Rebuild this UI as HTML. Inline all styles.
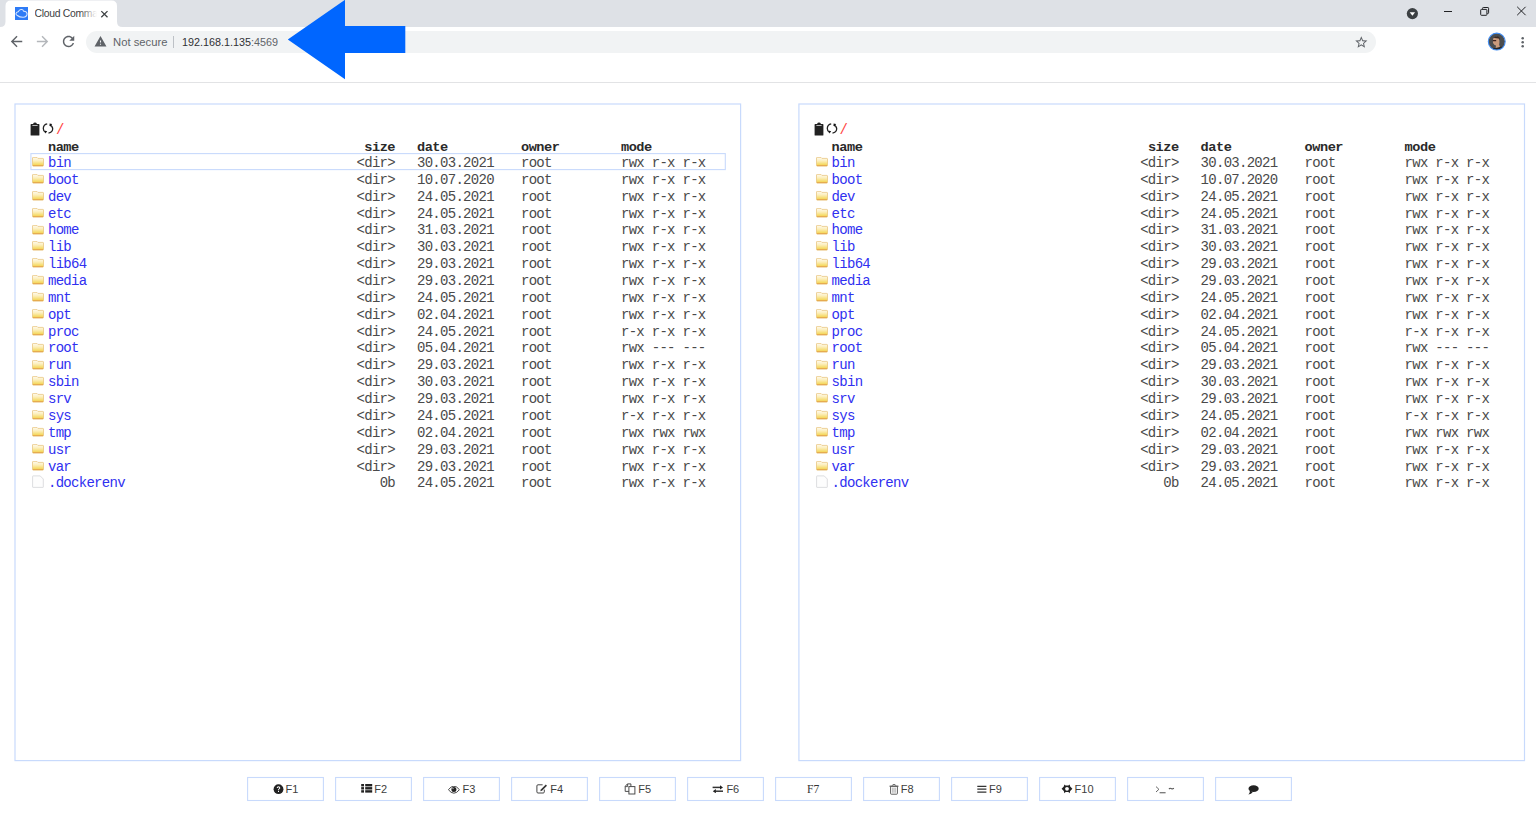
<!DOCTYPE html>
<html><head><meta charset="utf-8"><style>
html,body{margin:0;padding:0;width:1536px;height:835px;overflow:hidden;background:#fff;position:relative;}
.abs{position:absolute;}
#tabbar{position:absolute;left:0;top:0;width:1536px;height:27px;background:#dee1e6;}
#hline{position:absolute;left:0;top:82px;width:1536px;height:1px;background:#e2e3e5;}
.panel{position:absolute;top:103.5px;width:725px;height:656px;border:1.2px solid #d0e0fd;box-sizing:content-box;}
.t{position:absolute;font-family:"Liberation Mono",monospace;font-size:14px;letter-spacing:-0.72px;line-height:16.87px;height:16.87px;white-space:pre;color:#4a4a4a;}
.nm{color:#3030f0;}
.hdr{font-weight:bold;color:#2a2a2a;font-size:13.6px;letter-spacing:-0.48px;}
.path{color:#f44;}
.sel{position:absolute;width:694px;height:15.670000000000002px;border:1px solid #c9dafc;}
.icw{position:absolute;line-height:0;}
.clip{position:absolute;}
.tabtitle{left:34.5px;top:7.2px;font-family:"Liberation Sans",sans-serif;font-size:10.4px;letter-spacing:-0.3px;line-height:14px;color:#3c4043;white-space:nowrap;width:62px;overflow:hidden;}
.tabfade{left:80px;top:5px;width:17px;height:16px;background:linear-gradient(to right,rgba(255,255,255,0),#fff);}
.omni{left:86px;top:30.5px;width:1290px;height:22.5px;border-radius:11.25px;background:#f1f3f4;}
.ns{left:113.1px;top:36.1px;font-family:"Liberation Sans",sans-serif;font-size:11.25px;line-height:13px;color:#5f6368;white-space:nowrap;}
.url{left:181.9px;top:35.6px;font-family:"Liberation Sans",sans-serif;font-size:10.8px;line-height:13px;color:#5f6368;white-space:nowrap;}

.btn{position:absolute;top:777px;width:77px;height:24px;border:1px solid #c9dafc;box-sizing:border-box;}
.bt{position:absolute;top:783.7px;font-family:"Liberation Sans",sans-serif;font-size:11px;line-height:11px;color:#3d3d3d;white-space:nowrap;}
.bt7{position:absolute;top:783.7px;font-family:"Liberation Serif",serif;font-size:11.5px;line-height:11px;color:#333;white-space:nowrap;}
</style></head><body>
<svg width="0" height="0" style="position:absolute"><defs><linearGradient id="fg" x1="0" y1="0" x2="0" y2="1"><stop offset="0" stop-color="#fffaf0"/><stop offset="0.4" stop-color="#fcefbd"/><stop offset="1" stop-color="#f2d03e"/></linearGradient></defs></svg>

<div id="tabbar"></div>
<svg class="abs" style="left:0;top:0" width="130" height="28" viewBox="0 0 130 28">
<path d="M0 27 Q5.5 27 5.5 21.5 V6 Q5.5 0.5 11 0.5 H111.5 Q117 0.5 117 6 V21.5 Q117 27 122.5 27 Z" fill="#ffffff"/>
</svg>
<svg class="abs" style="left:15px;top:7px" width="13" height="13" viewBox="0 0 13 13">
<rect x="0" y="0" width="13" height="13" fill="#2e7bf6"/>
<path d="M0.9 6.8 Q1.2 5 3.2 4.8 Q4.6 2.1 6.4 2.5 Q8 2.3 8.6 4.2 Q11.7 4 12.1 6.9 Q11.9 10.1 8.3 10.3 Q4.6 10.4 2.4 8.5 Q1 7.8 0.9 6.8 Z" fill="none" stroke="#d6e5ff" stroke-width="1.05"/>
</svg>
<div class="abs tabtitle">Cloud Comma</div>
<div class="abs tabfade"></div>
<svg class="abs" style="left:100px;top:9.5px" width="9" height="9" viewBox="0 0 9 9"><path d="M1.3 1.1 L7.5 7.3 M7.5 1.1 L1.3 7.3" stroke="#3c4043" stroke-width="1.25"/></svg>

<svg class="abs" style="left:1405px;top:7px" width="15" height="14" viewBox="0 0 15 14"><circle cx="7.4" cy="6.6" r="5.6" fill="#3c4043"/><path d="M4.7 5.2 H10.1 L7.4 8.7 Z" fill="#fff"/></svg>
<div class="abs" style="left:1443.5px;top:10.8px;width:8.5px;height:1.2px;background:#202124"></div>
<svg class="abs" style="left:1479px;top:6px" width="12" height="11" viewBox="0 0 12 11"><path d="M3.6 2.9 V2.2 Q3.6 1.5 4.3 1.5 H8.9 Q9.6 1.5 9.6 2.2 V6.8 Q9.6 7.5 8.9 7.5 H8.3" fill="none" stroke="#202124" stroke-width="1"/><rect x="1.7" y="3.4" width="6.2" height="5.9" rx="0.7" fill="none" stroke="#202124" stroke-width="1"/></svg>
<svg class="abs" style="left:1516px;top:6px" width="11" height="10" viewBox="0 0 11 10"><path d="M1.2 0.8 L9.6 9.2 M9.6 0.8 L1.2 9.2" stroke="#202124" stroke-width="1"/></svg>

<svg class="abs" style="left:8.25px;top:33.15px" width="17.1" height="17.1" viewBox="0 0 24 24"><path d="M20 11H7.83l5.59-5.59L12 4l-8 8 8 8 1.41-1.41L7.83 13H20v-2z" fill="#5f6368"/></svg>
<svg class="abs" style="left:33.95px;top:33.15px" width="17.1" height="17.1" viewBox="0 0 24 24"><path d="M12 4l-1.41 1.41L16.17 11H4v2h12.17l-5.58 5.59L12 20l8-8z" fill="#b4b7bb"/></svg>
<svg class="abs" style="left:59.65px;top:33.15px" width="17.1" height="17.1" viewBox="0 0 24 24"><path d="M17.65 6.35C16.2 4.9 14.21 4 12 4c-4.42 0-7.99 3.58-7.99 8s3.57 8 7.99 8c3.73 0 6.84-2.55 7.73-6h-2.08c-.82 2.33-3.04 4-5.65 4-3.31 0-6-2.69-6-6s2.69-6 6-6c1.66 0 3.14.69 4.22 1.78L13 11h7V4l-2.35 2.35z" fill="#5f6368"/></svg>

<div class="abs omni"></div>
<svg class="abs" style="left:93.8px;top:34.9px" width="13" height="13" viewBox="0 0 24 24"><path d="M1 21h22L12 2 1 21zm12-3h-2v-2h2v2zm0-4h-2v-4h2v4z" fill="#5f6368"/></svg>
<div class="abs ns">Not secure</div>
<div class="abs" style="left:173px;top:36px;width:1px;height:11.5px;background:#bdc1c6"></div>
<div class="abs url"><span style="color:#303134">192.168.1.135</span>:4569</div>
<svg class="abs" style="left:1354.3px;top:34.6px" width="14.6" height="14.6" viewBox="0 0 24 24"><path d="M22 9.24l-7.19-.62L12 2 9.19 8.63 2 9.24l5.46 4.73L5.82 21 12 17.27 18.18 21l-1.63-7.03L22 9.24zM12 15.4l-3.76 2.27 1-4.28-3.32-2.88 4.38-.38L12 6.1l1.71 4.04 4.38.38-3.32 2.88 1 4.28L12 15.4z" fill="#5f6368"/></svg>
<svg class="abs" style="left:1487px;top:32px" width="20" height="20" viewBox="0 0 20 20"><defs><clipPath id="avc"><circle cx="9.75" cy="9.6" r="8.2"/></clipPath></defs><circle cx="9.75" cy="9.6" r="8.3" fill="#4b4d4f"/><g clip-path="url(#avc)"><path d="M6.2 6.4 Q7.5 4.6 10.2 4.9 Q12.3 5.4 12.4 8.2 Q12.6 10.8 12.1 12.6 L13.2 16 Q10.8 17.6 8.6 16.6 L9 13.6 Q7.2 13.4 6.6 11.8 Q6 11.5 5.9 10.8 L6.1 9.6 Q5.2 9.2 6 8.2 Z" fill="#c99a7c"/><path d="M6.4 5.8 Q8.6 3.9 11.2 4.6 Q13.2 5.4 12.9 8.4 Q12.4 7 11.6 6.6 Q9.5 6.2 6.4 5.8 Z" fill="#3a2a24"/><path d="M5.6 8 H9.2 V9.2 H5.8 Z" fill="#3a2220"/><path d="M2 19 Q4.5 15.5 8.8 16 Q12.2 15.2 14.2 14.4 Q17 15.5 18.5 19 Z" fill="#272727"/></g><circle cx="9.75" cy="9.6" r="8.45" fill="none" stroke="#3f8cf3" stroke-width="1.1"/></svg>
<svg class="abs" style="left:1520px;top:36px" width="6" height="13" viewBox="0 0 6 13"><circle cx="2.7" cy="2.2" r="1.25" fill="#5f6368"/><circle cx="2.7" cy="6.2" r="1.25" fill="#5f6368"/><circle cx="2.7" cy="10.3" r="1.25" fill="#5f6368"/></svg>

<div id="hline"></div>
<svg class="abs" style="left:280px;top:0" width="130" height="82" viewBox="280 0 130 82"><path d="M287.8 39.4 L345 -0.2 V25.9 H405.3 V53 H345 V79.2 Z" fill="#0066ff"/></svg>

<svg class="clip" style="left:30px;top:122px" width="10" height="14" viewBox="0 0 10 14"><path d="M0.6 2.6 Q0.6 2 1.2 2 H3 Q3.6 0.6 5 0.6 Q6.4 0.6 7 2 H8.8 Q9.4 2 9.4 2.6 V13 Q9.4 13.5 8.8 13.5 H1.2 Q0.6 13.5 0.6 13 Z" fill="#222"/><path d="M2.4 3.5 H7.6" stroke="#ddd" stroke-width="0.8"/></svg>
<svg class="clip" style="left:42px;top:123px" width="12" height="11" viewBox="0 0 12 11"><path d="M5.2 0.9 Q1.4 1.6 1.3 5.4 Q1.4 8.2 3.4 9.3" fill="none" stroke="#222" stroke-width="1.3"/><path d="M2.4 7.5 L5.2 8.2 L3.4 10.6 Z" fill="#111"/><path d="M7.4 1.9 Q10.6 2.9 10.7 5.7 Q10.6 9.3 6.5 10.1" fill="none" stroke="#222" stroke-width="1.3"/><path d="M7.5 0.5 L10.1 0.9 L8.6 3.5 Z" fill="#111"/></svg>
<div class="t path" style="left:56px;top:121.72999999999999px">/</div>
<div class="t hdr" style="left:48px;top:139.73px">name</div>
<div class="t hdr r" style="right:1141px;top:139.73px">size</div>
<div class="t hdr" style="left:417px;top:139.73px">date</div>
<div class="t hdr" style="left:521px;top:139.73px">owner</div>
<div class="t hdr" style="left:621px;top:139.73px">mode</div>
<div class="icw" style="left:32px;top:157.1px"><svg class="ic" width="12" height="10" viewBox="0 0 12 10"><path d="M0.5 1 Q0.5 0.4 1.1 0.4 H5 L5.9 1.4 H10.9 Q11.5 1.4 11.5 2 V8.5 Q11.5 9.1 10.9 9.1 H1.1 Q0.5 9.1 0.5 8.5 Z" fill="url(#fg)" stroke="#e9c682" stroke-width="0.8"/><path d="M1 8.6 H11" stroke="#e4a34e" stroke-width="0.9"/></svg></div>
<div class="t nm" style="left:48px;top:154.9px">bin</div>
<div class="t r" style="right:1141px;top:154.9px">&lt;dir&gt;</div>
<div class="t" style="left:417px;top:154.9px">30.03.2021</div>
<div class="t" style="left:521px;top:154.9px">root</div>
<div class="t" style="left:621px;top:154.9px">rwx r-x r-x</div>
<div class="icw" style="left:32px;top:173.97px"><svg class="ic" width="12" height="10" viewBox="0 0 12 10"><path d="M0.5 1 Q0.5 0.4 1.1 0.4 H5 L5.9 1.4 H10.9 Q11.5 1.4 11.5 2 V8.5 Q11.5 9.1 10.9 9.1 H1.1 Q0.5 9.1 0.5 8.5 Z" fill="url(#fg)" stroke="#e9c682" stroke-width="0.8"/><path d="M1 8.6 H11" stroke="#e4a34e" stroke-width="0.9"/></svg></div>
<div class="t nm" style="left:48px;top:171.77px">boot</div>
<div class="t r" style="right:1141px;top:171.77px">&lt;dir&gt;</div>
<div class="t" style="left:417px;top:171.77px">10.07.2020</div>
<div class="t" style="left:521px;top:171.77px">root</div>
<div class="t" style="left:621px;top:171.77px">rwx r-x r-x</div>
<div class="icw" style="left:32px;top:190.84px"><svg class="ic" width="12" height="10" viewBox="0 0 12 10"><path d="M0.5 1 Q0.5 0.4 1.1 0.4 H5 L5.9 1.4 H10.9 Q11.5 1.4 11.5 2 V8.5 Q11.5 9.1 10.9 9.1 H1.1 Q0.5 9.1 0.5 8.5 Z" fill="url(#fg)" stroke="#e9c682" stroke-width="0.8"/><path d="M1 8.6 H11" stroke="#e4a34e" stroke-width="0.9"/></svg></div>
<div class="t nm" style="left:48px;top:188.64000000000001px">dev</div>
<div class="t r" style="right:1141px;top:188.64000000000001px">&lt;dir&gt;</div>
<div class="t" style="left:417px;top:188.64000000000001px">24.05.2021</div>
<div class="t" style="left:521px;top:188.64000000000001px">root</div>
<div class="t" style="left:621px;top:188.64000000000001px">rwx r-x r-x</div>
<div class="icw" style="left:32px;top:207.70999999999998px"><svg class="ic" width="12" height="10" viewBox="0 0 12 10"><path d="M0.5 1 Q0.5 0.4 1.1 0.4 H5 L5.9 1.4 H10.9 Q11.5 1.4 11.5 2 V8.5 Q11.5 9.1 10.9 9.1 H1.1 Q0.5 9.1 0.5 8.5 Z" fill="url(#fg)" stroke="#e9c682" stroke-width="0.8"/><path d="M1 8.6 H11" stroke="#e4a34e" stroke-width="0.9"/></svg></div>
<div class="t nm" style="left:48px;top:205.51px">etc</div>
<div class="t r" style="right:1141px;top:205.51px">&lt;dir&gt;</div>
<div class="t" style="left:417px;top:205.51px">24.05.2021</div>
<div class="t" style="left:521px;top:205.51px">root</div>
<div class="t" style="left:621px;top:205.51px">rwx r-x r-x</div>
<div class="icw" style="left:32px;top:224.57999999999998px"><svg class="ic" width="12" height="10" viewBox="0 0 12 10"><path d="M0.5 1 Q0.5 0.4 1.1 0.4 H5 L5.9 1.4 H10.9 Q11.5 1.4 11.5 2 V8.5 Q11.5 9.1 10.9 9.1 H1.1 Q0.5 9.1 0.5 8.5 Z" fill="url(#fg)" stroke="#e9c682" stroke-width="0.8"/><path d="M1 8.6 H11" stroke="#e4a34e" stroke-width="0.9"/></svg></div>
<div class="t nm" style="left:48px;top:222.38px">home</div>
<div class="t r" style="right:1141px;top:222.38px">&lt;dir&gt;</div>
<div class="t" style="left:417px;top:222.38px">31.03.2021</div>
<div class="t" style="left:521px;top:222.38px">root</div>
<div class="t" style="left:621px;top:222.38px">rwx r-x r-x</div>
<div class="icw" style="left:32px;top:241.45px"><svg class="ic" width="12" height="10" viewBox="0 0 12 10"><path d="M0.5 1 Q0.5 0.4 1.1 0.4 H5 L5.9 1.4 H10.9 Q11.5 1.4 11.5 2 V8.5 Q11.5 9.1 10.9 9.1 H1.1 Q0.5 9.1 0.5 8.5 Z" fill="url(#fg)" stroke="#e9c682" stroke-width="0.8"/><path d="M1 8.6 H11" stroke="#e4a34e" stroke-width="0.9"/></svg></div>
<div class="t nm" style="left:48px;top:239.25px">lib</div>
<div class="t r" style="right:1141px;top:239.25px">&lt;dir&gt;</div>
<div class="t" style="left:417px;top:239.25px">30.03.2021</div>
<div class="t" style="left:521px;top:239.25px">root</div>
<div class="t" style="left:621px;top:239.25px">rwx r-x r-x</div>
<div class="icw" style="left:32px;top:258.32px"><svg class="ic" width="12" height="10" viewBox="0 0 12 10"><path d="M0.5 1 Q0.5 0.4 1.1 0.4 H5 L5.9 1.4 H10.9 Q11.5 1.4 11.5 2 V8.5 Q11.5 9.1 10.9 9.1 H1.1 Q0.5 9.1 0.5 8.5 Z" fill="url(#fg)" stroke="#e9c682" stroke-width="0.8"/><path d="M1 8.6 H11" stroke="#e4a34e" stroke-width="0.9"/></svg></div>
<div class="t nm" style="left:48px;top:256.12px">lib64</div>
<div class="t r" style="right:1141px;top:256.12px">&lt;dir&gt;</div>
<div class="t" style="left:417px;top:256.12px">29.03.2021</div>
<div class="t" style="left:521px;top:256.12px">root</div>
<div class="t" style="left:621px;top:256.12px">rwx r-x r-x</div>
<div class="icw" style="left:32px;top:275.19px"><svg class="ic" width="12" height="10" viewBox="0 0 12 10"><path d="M0.5 1 Q0.5 0.4 1.1 0.4 H5 L5.9 1.4 H10.9 Q11.5 1.4 11.5 2 V8.5 Q11.5 9.1 10.9 9.1 H1.1 Q0.5 9.1 0.5 8.5 Z" fill="url(#fg)" stroke="#e9c682" stroke-width="0.8"/><path d="M1 8.6 H11" stroke="#e4a34e" stroke-width="0.9"/></svg></div>
<div class="t nm" style="left:48px;top:272.99px">media</div>
<div class="t r" style="right:1141px;top:272.99px">&lt;dir&gt;</div>
<div class="t" style="left:417px;top:272.99px">29.03.2021</div>
<div class="t" style="left:521px;top:272.99px">root</div>
<div class="t" style="left:621px;top:272.99px">rwx r-x r-x</div>
<div class="icw" style="left:32px;top:292.06px"><svg class="ic" width="12" height="10" viewBox="0 0 12 10"><path d="M0.5 1 Q0.5 0.4 1.1 0.4 H5 L5.9 1.4 H10.9 Q11.5 1.4 11.5 2 V8.5 Q11.5 9.1 10.9 9.1 H1.1 Q0.5 9.1 0.5 8.5 Z" fill="url(#fg)" stroke="#e9c682" stroke-width="0.8"/><path d="M1 8.6 H11" stroke="#e4a34e" stroke-width="0.9"/></svg></div>
<div class="t nm" style="left:48px;top:289.86px">mnt</div>
<div class="t r" style="right:1141px;top:289.86px">&lt;dir&gt;</div>
<div class="t" style="left:417px;top:289.86px">24.05.2021</div>
<div class="t" style="left:521px;top:289.86px">root</div>
<div class="t" style="left:621px;top:289.86px">rwx r-x r-x</div>
<div class="icw" style="left:32px;top:308.93px"><svg class="ic" width="12" height="10" viewBox="0 0 12 10"><path d="M0.5 1 Q0.5 0.4 1.1 0.4 H5 L5.9 1.4 H10.9 Q11.5 1.4 11.5 2 V8.5 Q11.5 9.1 10.9 9.1 H1.1 Q0.5 9.1 0.5 8.5 Z" fill="url(#fg)" stroke="#e9c682" stroke-width="0.8"/><path d="M1 8.6 H11" stroke="#e4a34e" stroke-width="0.9"/></svg></div>
<div class="t nm" style="left:48px;top:306.73px">opt</div>
<div class="t r" style="right:1141px;top:306.73px">&lt;dir&gt;</div>
<div class="t" style="left:417px;top:306.73px">02.04.2021</div>
<div class="t" style="left:521px;top:306.73px">root</div>
<div class="t" style="left:621px;top:306.73px">rwx r-x r-x</div>
<div class="icw" style="left:32px;top:325.8px"><svg class="ic" width="12" height="10" viewBox="0 0 12 10"><path d="M0.5 1 Q0.5 0.4 1.1 0.4 H5 L5.9 1.4 H10.9 Q11.5 1.4 11.5 2 V8.5 Q11.5 9.1 10.9 9.1 H1.1 Q0.5 9.1 0.5 8.5 Z" fill="url(#fg)" stroke="#e9c682" stroke-width="0.8"/><path d="M1 8.6 H11" stroke="#e4a34e" stroke-width="0.9"/></svg></div>
<div class="t nm" style="left:48px;top:323.6px">proc</div>
<div class="t r" style="right:1141px;top:323.6px">&lt;dir&gt;</div>
<div class="t" style="left:417px;top:323.6px">24.05.2021</div>
<div class="t" style="left:521px;top:323.6px">root</div>
<div class="t" style="left:621px;top:323.6px">r-x r-x r-x</div>
<div class="icw" style="left:32px;top:342.67px"><svg class="ic" width="12" height="10" viewBox="0 0 12 10"><path d="M0.5 1 Q0.5 0.4 1.1 0.4 H5 L5.9 1.4 H10.9 Q11.5 1.4 11.5 2 V8.5 Q11.5 9.1 10.9 9.1 H1.1 Q0.5 9.1 0.5 8.5 Z" fill="url(#fg)" stroke="#e9c682" stroke-width="0.8"/><path d="M1 8.6 H11" stroke="#e4a34e" stroke-width="0.9"/></svg></div>
<div class="t nm" style="left:48px;top:340.47px">root</div>
<div class="t r" style="right:1141px;top:340.47px">&lt;dir&gt;</div>
<div class="t" style="left:417px;top:340.47px">05.04.2021</div>
<div class="t" style="left:521px;top:340.47px">root</div>
<div class="t" style="left:621px;top:340.47px">rwx --- ---</div>
<div class="icw" style="left:32px;top:359.53999999999996px"><svg class="ic" width="12" height="10" viewBox="0 0 12 10"><path d="M0.5 1 Q0.5 0.4 1.1 0.4 H5 L5.9 1.4 H10.9 Q11.5 1.4 11.5 2 V8.5 Q11.5 9.1 10.9 9.1 H1.1 Q0.5 9.1 0.5 8.5 Z" fill="url(#fg)" stroke="#e9c682" stroke-width="0.8"/><path d="M1 8.6 H11" stroke="#e4a34e" stroke-width="0.9"/></svg></div>
<div class="t nm" style="left:48px;top:357.34px">run</div>
<div class="t r" style="right:1141px;top:357.34px">&lt;dir&gt;</div>
<div class="t" style="left:417px;top:357.34px">29.03.2021</div>
<div class="t" style="left:521px;top:357.34px">root</div>
<div class="t" style="left:621px;top:357.34px">rwx r-x r-x</div>
<div class="icw" style="left:32px;top:376.40999999999997px"><svg class="ic" width="12" height="10" viewBox="0 0 12 10"><path d="M0.5 1 Q0.5 0.4 1.1 0.4 H5 L5.9 1.4 H10.9 Q11.5 1.4 11.5 2 V8.5 Q11.5 9.1 10.9 9.1 H1.1 Q0.5 9.1 0.5 8.5 Z" fill="url(#fg)" stroke="#e9c682" stroke-width="0.8"/><path d="M1 8.6 H11" stroke="#e4a34e" stroke-width="0.9"/></svg></div>
<div class="t nm" style="left:48px;top:374.21px">sbin</div>
<div class="t r" style="right:1141px;top:374.21px">&lt;dir&gt;</div>
<div class="t" style="left:417px;top:374.21px">30.03.2021</div>
<div class="t" style="left:521px;top:374.21px">root</div>
<div class="t" style="left:621px;top:374.21px">rwx r-x r-x</div>
<div class="icw" style="left:32px;top:393.28px"><svg class="ic" width="12" height="10" viewBox="0 0 12 10"><path d="M0.5 1 Q0.5 0.4 1.1 0.4 H5 L5.9 1.4 H10.9 Q11.5 1.4 11.5 2 V8.5 Q11.5 9.1 10.9 9.1 H1.1 Q0.5 9.1 0.5 8.5 Z" fill="url(#fg)" stroke="#e9c682" stroke-width="0.8"/><path d="M1 8.6 H11" stroke="#e4a34e" stroke-width="0.9"/></svg></div>
<div class="t nm" style="left:48px;top:391.08px">srv</div>
<div class="t r" style="right:1141px;top:391.08px">&lt;dir&gt;</div>
<div class="t" style="left:417px;top:391.08px">29.03.2021</div>
<div class="t" style="left:521px;top:391.08px">root</div>
<div class="t" style="left:621px;top:391.08px">rwx r-x r-x</div>
<div class="icw" style="left:32px;top:410.15px"><svg class="ic" width="12" height="10" viewBox="0 0 12 10"><path d="M0.5 1 Q0.5 0.4 1.1 0.4 H5 L5.9 1.4 H10.9 Q11.5 1.4 11.5 2 V8.5 Q11.5 9.1 10.9 9.1 H1.1 Q0.5 9.1 0.5 8.5 Z" fill="url(#fg)" stroke="#e9c682" stroke-width="0.8"/><path d="M1 8.6 H11" stroke="#e4a34e" stroke-width="0.9"/></svg></div>
<div class="t nm" style="left:48px;top:407.95px">sys</div>
<div class="t r" style="right:1141px;top:407.95px">&lt;dir&gt;</div>
<div class="t" style="left:417px;top:407.95px">24.05.2021</div>
<div class="t" style="left:521px;top:407.95px">root</div>
<div class="t" style="left:621px;top:407.95px">r-x r-x r-x</div>
<div class="icw" style="left:32px;top:427.02px"><svg class="ic" width="12" height="10" viewBox="0 0 12 10"><path d="M0.5 1 Q0.5 0.4 1.1 0.4 H5 L5.9 1.4 H10.9 Q11.5 1.4 11.5 2 V8.5 Q11.5 9.1 10.9 9.1 H1.1 Q0.5 9.1 0.5 8.5 Z" fill="url(#fg)" stroke="#e9c682" stroke-width="0.8"/><path d="M1 8.6 H11" stroke="#e4a34e" stroke-width="0.9"/></svg></div>
<div class="t nm" style="left:48px;top:424.82px">tmp</div>
<div class="t r" style="right:1141px;top:424.82px">&lt;dir&gt;</div>
<div class="t" style="left:417px;top:424.82px">02.04.2021</div>
<div class="t" style="left:521px;top:424.82px">root</div>
<div class="t" style="left:621px;top:424.82px">rwx rwx rwx</div>
<div class="icw" style="left:32px;top:443.89px"><svg class="ic" width="12" height="10" viewBox="0 0 12 10"><path d="M0.5 1 Q0.5 0.4 1.1 0.4 H5 L5.9 1.4 H10.9 Q11.5 1.4 11.5 2 V8.5 Q11.5 9.1 10.9 9.1 H1.1 Q0.5 9.1 0.5 8.5 Z" fill="url(#fg)" stroke="#e9c682" stroke-width="0.8"/><path d="M1 8.6 H11" stroke="#e4a34e" stroke-width="0.9"/></svg></div>
<div class="t nm" style="left:48px;top:441.69px">usr</div>
<div class="t r" style="right:1141px;top:441.69px">&lt;dir&gt;</div>
<div class="t" style="left:417px;top:441.69px">29.03.2021</div>
<div class="t" style="left:521px;top:441.69px">root</div>
<div class="t" style="left:621px;top:441.69px">rwx r-x r-x</div>
<div class="icw" style="left:32px;top:460.76px"><svg class="ic" width="12" height="10" viewBox="0 0 12 10"><path d="M0.5 1 Q0.5 0.4 1.1 0.4 H5 L5.9 1.4 H10.9 Q11.5 1.4 11.5 2 V8.5 Q11.5 9.1 10.9 9.1 H1.1 Q0.5 9.1 0.5 8.5 Z" fill="url(#fg)" stroke="#e9c682" stroke-width="0.8"/><path d="M1 8.6 H11" stroke="#e4a34e" stroke-width="0.9"/></svg></div>
<div class="t nm" style="left:48px;top:458.56px">var</div>
<div class="t r" style="right:1141px;top:458.56px">&lt;dir&gt;</div>
<div class="t" style="left:417px;top:458.56px">29.03.2021</div>
<div class="t" style="left:521px;top:458.56px">root</div>
<div class="t" style="left:621px;top:458.56px">rwx r-x r-x</div>
<div class="icw" style="left:32px;top:474.73px"><svg class="ic" width="12" height="13" viewBox="0 0 12 13"><path d="M1 0.9 Q0.6 0.9 0.6 1.3 V12 Q0.6 12.4 1 12.4 H10.9 Q11.3 12.4 11.3 12 V4 L8.2 0.9 Z" fill="#fdfdfd" stroke="#d9dadc" stroke-width="0.9"/></svg></div>
<div class="t nm" style="left:48px;top:475.43px">.dockerenv</div>
<div class="t r" style="right:1141px;top:475.43px">0b</div>
<div class="t" style="left:417px;top:475.43px">24.05.2021</div>
<div class="t" style="left:521px;top:475.43px">root</div>
<div class="t" style="left:621px;top:475.43px">rwx r-x r-x</div>
<svg class="clip" style="left:813.6px;top:122px" width="10" height="14" viewBox="0 0 10 14"><path d="M0.6 2.6 Q0.6 2 1.2 2 H3 Q3.6 0.6 5 0.6 Q6.4 0.6 7 2 H8.8 Q9.4 2 9.4 2.6 V13 Q9.4 13.5 8.8 13.5 H1.2 Q0.6 13.5 0.6 13 Z" fill="#222"/><path d="M2.4 3.5 H7.6" stroke="#ddd" stroke-width="0.8"/></svg>
<svg class="clip" style="left:825.6px;top:123px" width="12" height="11" viewBox="0 0 12 11"><path d="M5.2 0.9 Q1.4 1.6 1.3 5.4 Q1.4 8.2 3.4 9.3" fill="none" stroke="#222" stroke-width="1.3"/><path d="M2.4 7.5 L5.2 8.2 L3.4 10.6 Z" fill="#111"/><path d="M7.4 1.9 Q10.6 2.9 10.7 5.7 Q10.6 9.3 6.5 10.1" fill="none" stroke="#222" stroke-width="1.3"/><path d="M7.5 0.5 L10.1 0.9 L8.6 3.5 Z" fill="#111"/></svg>
<div class="t path" style="left:839.6px;top:121.72999999999999px">/</div>
<div class="t hdr" style="left:831.6px;top:139.73px">name</div>
<div class="t hdr r" style="right:357.4000000000001px;top:139.73px">size</div>
<div class="t hdr" style="left:1200.6px;top:139.73px">date</div>
<div class="t hdr" style="left:1304.6px;top:139.73px">owner</div>
<div class="t hdr" style="left:1404.6px;top:139.73px">mode</div>
<div class="icw" style="left:815.6px;top:157.1px"><svg class="ic" width="12" height="10" viewBox="0 0 12 10"><path d="M0.5 1 Q0.5 0.4 1.1 0.4 H5 L5.9 1.4 H10.9 Q11.5 1.4 11.5 2 V8.5 Q11.5 9.1 10.9 9.1 H1.1 Q0.5 9.1 0.5 8.5 Z" fill="url(#fg)" stroke="#e9c682" stroke-width="0.8"/><path d="M1 8.6 H11" stroke="#e4a34e" stroke-width="0.9"/></svg></div>
<div class="t nm" style="left:831.6px;top:154.9px">bin</div>
<div class="t r" style="right:357.4000000000001px;top:154.9px">&lt;dir&gt;</div>
<div class="t" style="left:1200.6px;top:154.9px">30.03.2021</div>
<div class="t" style="left:1304.6px;top:154.9px">root</div>
<div class="t" style="left:1404.6px;top:154.9px">rwx r-x r-x</div>
<div class="icw" style="left:815.6px;top:173.97px"><svg class="ic" width="12" height="10" viewBox="0 0 12 10"><path d="M0.5 1 Q0.5 0.4 1.1 0.4 H5 L5.9 1.4 H10.9 Q11.5 1.4 11.5 2 V8.5 Q11.5 9.1 10.9 9.1 H1.1 Q0.5 9.1 0.5 8.5 Z" fill="url(#fg)" stroke="#e9c682" stroke-width="0.8"/><path d="M1 8.6 H11" stroke="#e4a34e" stroke-width="0.9"/></svg></div>
<div class="t nm" style="left:831.6px;top:171.77px">boot</div>
<div class="t r" style="right:357.4000000000001px;top:171.77px">&lt;dir&gt;</div>
<div class="t" style="left:1200.6px;top:171.77px">10.07.2020</div>
<div class="t" style="left:1304.6px;top:171.77px">root</div>
<div class="t" style="left:1404.6px;top:171.77px">rwx r-x r-x</div>
<div class="icw" style="left:815.6px;top:190.84px"><svg class="ic" width="12" height="10" viewBox="0 0 12 10"><path d="M0.5 1 Q0.5 0.4 1.1 0.4 H5 L5.9 1.4 H10.9 Q11.5 1.4 11.5 2 V8.5 Q11.5 9.1 10.9 9.1 H1.1 Q0.5 9.1 0.5 8.5 Z" fill="url(#fg)" stroke="#e9c682" stroke-width="0.8"/><path d="M1 8.6 H11" stroke="#e4a34e" stroke-width="0.9"/></svg></div>
<div class="t nm" style="left:831.6px;top:188.64000000000001px">dev</div>
<div class="t r" style="right:357.4000000000001px;top:188.64000000000001px">&lt;dir&gt;</div>
<div class="t" style="left:1200.6px;top:188.64000000000001px">24.05.2021</div>
<div class="t" style="left:1304.6px;top:188.64000000000001px">root</div>
<div class="t" style="left:1404.6px;top:188.64000000000001px">rwx r-x r-x</div>
<div class="icw" style="left:815.6px;top:207.70999999999998px"><svg class="ic" width="12" height="10" viewBox="0 0 12 10"><path d="M0.5 1 Q0.5 0.4 1.1 0.4 H5 L5.9 1.4 H10.9 Q11.5 1.4 11.5 2 V8.5 Q11.5 9.1 10.9 9.1 H1.1 Q0.5 9.1 0.5 8.5 Z" fill="url(#fg)" stroke="#e9c682" stroke-width="0.8"/><path d="M1 8.6 H11" stroke="#e4a34e" stroke-width="0.9"/></svg></div>
<div class="t nm" style="left:831.6px;top:205.51px">etc</div>
<div class="t r" style="right:357.4000000000001px;top:205.51px">&lt;dir&gt;</div>
<div class="t" style="left:1200.6px;top:205.51px">24.05.2021</div>
<div class="t" style="left:1304.6px;top:205.51px">root</div>
<div class="t" style="left:1404.6px;top:205.51px">rwx r-x r-x</div>
<div class="icw" style="left:815.6px;top:224.57999999999998px"><svg class="ic" width="12" height="10" viewBox="0 0 12 10"><path d="M0.5 1 Q0.5 0.4 1.1 0.4 H5 L5.9 1.4 H10.9 Q11.5 1.4 11.5 2 V8.5 Q11.5 9.1 10.9 9.1 H1.1 Q0.5 9.1 0.5 8.5 Z" fill="url(#fg)" stroke="#e9c682" stroke-width="0.8"/><path d="M1 8.6 H11" stroke="#e4a34e" stroke-width="0.9"/></svg></div>
<div class="t nm" style="left:831.6px;top:222.38px">home</div>
<div class="t r" style="right:357.4000000000001px;top:222.38px">&lt;dir&gt;</div>
<div class="t" style="left:1200.6px;top:222.38px">31.03.2021</div>
<div class="t" style="left:1304.6px;top:222.38px">root</div>
<div class="t" style="left:1404.6px;top:222.38px">rwx r-x r-x</div>
<div class="icw" style="left:815.6px;top:241.45px"><svg class="ic" width="12" height="10" viewBox="0 0 12 10"><path d="M0.5 1 Q0.5 0.4 1.1 0.4 H5 L5.9 1.4 H10.9 Q11.5 1.4 11.5 2 V8.5 Q11.5 9.1 10.9 9.1 H1.1 Q0.5 9.1 0.5 8.5 Z" fill="url(#fg)" stroke="#e9c682" stroke-width="0.8"/><path d="M1 8.6 H11" stroke="#e4a34e" stroke-width="0.9"/></svg></div>
<div class="t nm" style="left:831.6px;top:239.25px">lib</div>
<div class="t r" style="right:357.4000000000001px;top:239.25px">&lt;dir&gt;</div>
<div class="t" style="left:1200.6px;top:239.25px">30.03.2021</div>
<div class="t" style="left:1304.6px;top:239.25px">root</div>
<div class="t" style="left:1404.6px;top:239.25px">rwx r-x r-x</div>
<div class="icw" style="left:815.6px;top:258.32px"><svg class="ic" width="12" height="10" viewBox="0 0 12 10"><path d="M0.5 1 Q0.5 0.4 1.1 0.4 H5 L5.9 1.4 H10.9 Q11.5 1.4 11.5 2 V8.5 Q11.5 9.1 10.9 9.1 H1.1 Q0.5 9.1 0.5 8.5 Z" fill="url(#fg)" stroke="#e9c682" stroke-width="0.8"/><path d="M1 8.6 H11" stroke="#e4a34e" stroke-width="0.9"/></svg></div>
<div class="t nm" style="left:831.6px;top:256.12px">lib64</div>
<div class="t r" style="right:357.4000000000001px;top:256.12px">&lt;dir&gt;</div>
<div class="t" style="left:1200.6px;top:256.12px">29.03.2021</div>
<div class="t" style="left:1304.6px;top:256.12px">root</div>
<div class="t" style="left:1404.6px;top:256.12px">rwx r-x r-x</div>
<div class="icw" style="left:815.6px;top:275.19px"><svg class="ic" width="12" height="10" viewBox="0 0 12 10"><path d="M0.5 1 Q0.5 0.4 1.1 0.4 H5 L5.9 1.4 H10.9 Q11.5 1.4 11.5 2 V8.5 Q11.5 9.1 10.9 9.1 H1.1 Q0.5 9.1 0.5 8.5 Z" fill="url(#fg)" stroke="#e9c682" stroke-width="0.8"/><path d="M1 8.6 H11" stroke="#e4a34e" stroke-width="0.9"/></svg></div>
<div class="t nm" style="left:831.6px;top:272.99px">media</div>
<div class="t r" style="right:357.4000000000001px;top:272.99px">&lt;dir&gt;</div>
<div class="t" style="left:1200.6px;top:272.99px">29.03.2021</div>
<div class="t" style="left:1304.6px;top:272.99px">root</div>
<div class="t" style="left:1404.6px;top:272.99px">rwx r-x r-x</div>
<div class="icw" style="left:815.6px;top:292.06px"><svg class="ic" width="12" height="10" viewBox="0 0 12 10"><path d="M0.5 1 Q0.5 0.4 1.1 0.4 H5 L5.9 1.4 H10.9 Q11.5 1.4 11.5 2 V8.5 Q11.5 9.1 10.9 9.1 H1.1 Q0.5 9.1 0.5 8.5 Z" fill="url(#fg)" stroke="#e9c682" stroke-width="0.8"/><path d="M1 8.6 H11" stroke="#e4a34e" stroke-width="0.9"/></svg></div>
<div class="t nm" style="left:831.6px;top:289.86px">mnt</div>
<div class="t r" style="right:357.4000000000001px;top:289.86px">&lt;dir&gt;</div>
<div class="t" style="left:1200.6px;top:289.86px">24.05.2021</div>
<div class="t" style="left:1304.6px;top:289.86px">root</div>
<div class="t" style="left:1404.6px;top:289.86px">rwx r-x r-x</div>
<div class="icw" style="left:815.6px;top:308.93px"><svg class="ic" width="12" height="10" viewBox="0 0 12 10"><path d="M0.5 1 Q0.5 0.4 1.1 0.4 H5 L5.9 1.4 H10.9 Q11.5 1.4 11.5 2 V8.5 Q11.5 9.1 10.9 9.1 H1.1 Q0.5 9.1 0.5 8.5 Z" fill="url(#fg)" stroke="#e9c682" stroke-width="0.8"/><path d="M1 8.6 H11" stroke="#e4a34e" stroke-width="0.9"/></svg></div>
<div class="t nm" style="left:831.6px;top:306.73px">opt</div>
<div class="t r" style="right:357.4000000000001px;top:306.73px">&lt;dir&gt;</div>
<div class="t" style="left:1200.6px;top:306.73px">02.04.2021</div>
<div class="t" style="left:1304.6px;top:306.73px">root</div>
<div class="t" style="left:1404.6px;top:306.73px">rwx r-x r-x</div>
<div class="icw" style="left:815.6px;top:325.8px"><svg class="ic" width="12" height="10" viewBox="0 0 12 10"><path d="M0.5 1 Q0.5 0.4 1.1 0.4 H5 L5.9 1.4 H10.9 Q11.5 1.4 11.5 2 V8.5 Q11.5 9.1 10.9 9.1 H1.1 Q0.5 9.1 0.5 8.5 Z" fill="url(#fg)" stroke="#e9c682" stroke-width="0.8"/><path d="M1 8.6 H11" stroke="#e4a34e" stroke-width="0.9"/></svg></div>
<div class="t nm" style="left:831.6px;top:323.6px">proc</div>
<div class="t r" style="right:357.4000000000001px;top:323.6px">&lt;dir&gt;</div>
<div class="t" style="left:1200.6px;top:323.6px">24.05.2021</div>
<div class="t" style="left:1304.6px;top:323.6px">root</div>
<div class="t" style="left:1404.6px;top:323.6px">r-x r-x r-x</div>
<div class="icw" style="left:815.6px;top:342.67px"><svg class="ic" width="12" height="10" viewBox="0 0 12 10"><path d="M0.5 1 Q0.5 0.4 1.1 0.4 H5 L5.9 1.4 H10.9 Q11.5 1.4 11.5 2 V8.5 Q11.5 9.1 10.9 9.1 H1.1 Q0.5 9.1 0.5 8.5 Z" fill="url(#fg)" stroke="#e9c682" stroke-width="0.8"/><path d="M1 8.6 H11" stroke="#e4a34e" stroke-width="0.9"/></svg></div>
<div class="t nm" style="left:831.6px;top:340.47px">root</div>
<div class="t r" style="right:357.4000000000001px;top:340.47px">&lt;dir&gt;</div>
<div class="t" style="left:1200.6px;top:340.47px">05.04.2021</div>
<div class="t" style="left:1304.6px;top:340.47px">root</div>
<div class="t" style="left:1404.6px;top:340.47px">rwx --- ---</div>
<div class="icw" style="left:815.6px;top:359.53999999999996px"><svg class="ic" width="12" height="10" viewBox="0 0 12 10"><path d="M0.5 1 Q0.5 0.4 1.1 0.4 H5 L5.9 1.4 H10.9 Q11.5 1.4 11.5 2 V8.5 Q11.5 9.1 10.9 9.1 H1.1 Q0.5 9.1 0.5 8.5 Z" fill="url(#fg)" stroke="#e9c682" stroke-width="0.8"/><path d="M1 8.6 H11" stroke="#e4a34e" stroke-width="0.9"/></svg></div>
<div class="t nm" style="left:831.6px;top:357.34px">run</div>
<div class="t r" style="right:357.4000000000001px;top:357.34px">&lt;dir&gt;</div>
<div class="t" style="left:1200.6px;top:357.34px">29.03.2021</div>
<div class="t" style="left:1304.6px;top:357.34px">root</div>
<div class="t" style="left:1404.6px;top:357.34px">rwx r-x r-x</div>
<div class="icw" style="left:815.6px;top:376.40999999999997px"><svg class="ic" width="12" height="10" viewBox="0 0 12 10"><path d="M0.5 1 Q0.5 0.4 1.1 0.4 H5 L5.9 1.4 H10.9 Q11.5 1.4 11.5 2 V8.5 Q11.5 9.1 10.9 9.1 H1.1 Q0.5 9.1 0.5 8.5 Z" fill="url(#fg)" stroke="#e9c682" stroke-width="0.8"/><path d="M1 8.6 H11" stroke="#e4a34e" stroke-width="0.9"/></svg></div>
<div class="t nm" style="left:831.6px;top:374.21px">sbin</div>
<div class="t r" style="right:357.4000000000001px;top:374.21px">&lt;dir&gt;</div>
<div class="t" style="left:1200.6px;top:374.21px">30.03.2021</div>
<div class="t" style="left:1304.6px;top:374.21px">root</div>
<div class="t" style="left:1404.6px;top:374.21px">rwx r-x r-x</div>
<div class="icw" style="left:815.6px;top:393.28px"><svg class="ic" width="12" height="10" viewBox="0 0 12 10"><path d="M0.5 1 Q0.5 0.4 1.1 0.4 H5 L5.9 1.4 H10.9 Q11.5 1.4 11.5 2 V8.5 Q11.5 9.1 10.9 9.1 H1.1 Q0.5 9.1 0.5 8.5 Z" fill="url(#fg)" stroke="#e9c682" stroke-width="0.8"/><path d="M1 8.6 H11" stroke="#e4a34e" stroke-width="0.9"/></svg></div>
<div class="t nm" style="left:831.6px;top:391.08px">srv</div>
<div class="t r" style="right:357.4000000000001px;top:391.08px">&lt;dir&gt;</div>
<div class="t" style="left:1200.6px;top:391.08px">29.03.2021</div>
<div class="t" style="left:1304.6px;top:391.08px">root</div>
<div class="t" style="left:1404.6px;top:391.08px">rwx r-x r-x</div>
<div class="icw" style="left:815.6px;top:410.15px"><svg class="ic" width="12" height="10" viewBox="0 0 12 10"><path d="M0.5 1 Q0.5 0.4 1.1 0.4 H5 L5.9 1.4 H10.9 Q11.5 1.4 11.5 2 V8.5 Q11.5 9.1 10.9 9.1 H1.1 Q0.5 9.1 0.5 8.5 Z" fill="url(#fg)" stroke="#e9c682" stroke-width="0.8"/><path d="M1 8.6 H11" stroke="#e4a34e" stroke-width="0.9"/></svg></div>
<div class="t nm" style="left:831.6px;top:407.95px">sys</div>
<div class="t r" style="right:357.4000000000001px;top:407.95px">&lt;dir&gt;</div>
<div class="t" style="left:1200.6px;top:407.95px">24.05.2021</div>
<div class="t" style="left:1304.6px;top:407.95px">root</div>
<div class="t" style="left:1404.6px;top:407.95px">r-x r-x r-x</div>
<div class="icw" style="left:815.6px;top:427.02px"><svg class="ic" width="12" height="10" viewBox="0 0 12 10"><path d="M0.5 1 Q0.5 0.4 1.1 0.4 H5 L5.9 1.4 H10.9 Q11.5 1.4 11.5 2 V8.5 Q11.5 9.1 10.9 9.1 H1.1 Q0.5 9.1 0.5 8.5 Z" fill="url(#fg)" stroke="#e9c682" stroke-width="0.8"/><path d="M1 8.6 H11" stroke="#e4a34e" stroke-width="0.9"/></svg></div>
<div class="t nm" style="left:831.6px;top:424.82px">tmp</div>
<div class="t r" style="right:357.4000000000001px;top:424.82px">&lt;dir&gt;</div>
<div class="t" style="left:1200.6px;top:424.82px">02.04.2021</div>
<div class="t" style="left:1304.6px;top:424.82px">root</div>
<div class="t" style="left:1404.6px;top:424.82px">rwx rwx rwx</div>
<div class="icw" style="left:815.6px;top:443.89px"><svg class="ic" width="12" height="10" viewBox="0 0 12 10"><path d="M0.5 1 Q0.5 0.4 1.1 0.4 H5 L5.9 1.4 H10.9 Q11.5 1.4 11.5 2 V8.5 Q11.5 9.1 10.9 9.1 H1.1 Q0.5 9.1 0.5 8.5 Z" fill="url(#fg)" stroke="#e9c682" stroke-width="0.8"/><path d="M1 8.6 H11" stroke="#e4a34e" stroke-width="0.9"/></svg></div>
<div class="t nm" style="left:831.6px;top:441.69px">usr</div>
<div class="t r" style="right:357.4000000000001px;top:441.69px">&lt;dir&gt;</div>
<div class="t" style="left:1200.6px;top:441.69px">29.03.2021</div>
<div class="t" style="left:1304.6px;top:441.69px">root</div>
<div class="t" style="left:1404.6px;top:441.69px">rwx r-x r-x</div>
<div class="icw" style="left:815.6px;top:460.76px"><svg class="ic" width="12" height="10" viewBox="0 0 12 10"><path d="M0.5 1 Q0.5 0.4 1.1 0.4 H5 L5.9 1.4 H10.9 Q11.5 1.4 11.5 2 V8.5 Q11.5 9.1 10.9 9.1 H1.1 Q0.5 9.1 0.5 8.5 Z" fill="url(#fg)" stroke="#e9c682" stroke-width="0.8"/><path d="M1 8.6 H11" stroke="#e4a34e" stroke-width="0.9"/></svg></div>
<div class="t nm" style="left:831.6px;top:458.56px">var</div>
<div class="t r" style="right:357.4000000000001px;top:458.56px">&lt;dir&gt;</div>
<div class="t" style="left:1200.6px;top:458.56px">29.03.2021</div>
<div class="t" style="left:1304.6px;top:458.56px">root</div>
<div class="t" style="left:1404.6px;top:458.56px">rwx r-x r-x</div>
<div class="icw" style="left:815.6px;top:474.73px"><svg class="ic" width="12" height="13" viewBox="0 0 12 13"><path d="M1 0.9 Q0.6 0.9 0.6 1.3 V12 Q0.6 12.4 1 12.4 H10.9 Q11.3 12.4 11.3 12 V4 L8.2 0.9 Z" fill="#fdfdfd" stroke="#d9dadc" stroke-width="0.9"/></svg></div>
<div class="t nm" style="left:831.6px;top:475.43px">.dockerenv</div>
<div class="t r" style="right:357.4000000000001px;top:475.43px">0b</div>
<div class="t" style="left:1200.6px;top:475.43px">24.05.2021</div>
<div class="t" style="left:1304.6px;top:475.43px">root</div>
<div class="t" style="left:1404.6px;top:475.43px">rwx r-x r-x</div>
<svg class="abs" style="left:0;top:0" width="1536" height="835" viewBox="0 0 1536 835"><rect x="15" y="104" width="725.6" height="656.6" fill="none" stroke="#c8dafc" stroke-width="1.2"/><rect x="798.9" y="104" width="725.6" height="656.6" fill="none" stroke="#c8dafc" stroke-width="1.2"/><rect x="30.9" y="153.6" width="694.4" height="16" fill="none" stroke="#c8dafc" stroke-width="1.1"/><rect x="247.6" y="777.5" width="75.8" height="23" fill="none" stroke="#c8dafc" stroke-width="1.1"/><rect x="335.6" y="777.5" width="75.8" height="23" fill="none" stroke="#c8dafc" stroke-width="1.1"/><rect x="423.6" y="777.5" width="75.8" height="23" fill="none" stroke="#c8dafc" stroke-width="1.1"/><rect x="511.6" y="777.5" width="75.8" height="23" fill="none" stroke="#c8dafc" stroke-width="1.1"/><rect x="599.6" y="777.5" width="75.8" height="23" fill="none" stroke="#c8dafc" stroke-width="1.1"/><rect x="687.6" y="777.5" width="75.8" height="23" fill="none" stroke="#c8dafc" stroke-width="1.1"/><rect x="775.6" y="777.5" width="75.8" height="23" fill="none" stroke="#c8dafc" stroke-width="1.1"/><rect x="863.6" y="777.5" width="75.8" height="23" fill="none" stroke="#c8dafc" stroke-width="1.1"/><rect x="951.6" y="777.5" width="75.8" height="23" fill="none" stroke="#c8dafc" stroke-width="1.1"/><rect x="1039.6" y="777.5" width="75.8" height="23" fill="none" stroke="#c8dafc" stroke-width="1.1"/><rect x="1127.6" y="777.5" width="75.8" height="23" fill="none" stroke="#c8dafc" stroke-width="1.1"/><rect x="1215.6" y="777.5" width="75.8" height="23" fill="none" stroke="#c8dafc" stroke-width="1.1"/></svg>

<svg class="abs" style="left:272.5px;top:783.5px" width="11" height="11" viewBox="0 0 11 11"><circle cx="5.5" cy="5.2" r="4.9" fill="#222"/><path d="M3.7 4.1 Q3.7 2.3 5.5 2.3 Q7.3 2.3 7.3 3.9 Q7.3 4.9 6.3 5.3 Q5.9 5.5 5.9 6.3 H5 Q5 5.1 5.7 4.7 Q6.3 4.4 6.2 3.9 Q6.1 3.3 5.5 3.3 Q4.8 3.3 4.8 4.1 Z" fill="#fff"/><rect x="5" y="6.9" width="1" height="1.1" fill="#fff"/></svg>
<div class="abs bt" style="left:285.5px">F1</div>
<svg class="abs" style="left:360.5px;top:783.8px" width="12" height="9" viewBox="0 0 12 9"><rect x="0.2" y="0" width="2.8" height="2.4" fill="#222"/><rect x="4.2" y="0" width="7" height="2.4" fill="#222"/><rect x="0.2" y="3.1" width="2.8" height="2.4" fill="#222"/><rect x="4.2" y="3.1" width="7" height="2.4" fill="#222"/><rect x="0.2" y="6.2" width="2.8" height="2.4" fill="#222"/><rect x="4.2" y="6.2" width="7" height="2.4" fill="#222"/></svg>
<div class="abs bt" style="left:374.3px">F2</div>
<svg class="abs" style="left:448px;top:785.5px" width="12" height="8" viewBox="0 0 12 8"><path d="M0.4 3.7 Q3 0.2 5.9 0.2 Q8.8 0.2 11.4 3.7 Q8.8 7.2 5.9 7.2 Q3 7.2 0.4 3.7 Z" fill="#fff" stroke="#333" stroke-width="0.9"/><circle cx="5.9" cy="3.6" r="2.5" fill="#222"/><circle cx="5" cy="2.6" r="0.7" fill="#ccc"/></svg>
<div class="abs bt" style="left:462.5px">F3</div>
<svg class="abs" style="left:536px;top:783.5px" width="12" height="10" viewBox="0 0 12 10"><path d="M6.6 0.8 H2 Q0.9 0.8 0.9 1.9 V7.9 Q0.9 9 2 9 H7.2 Q8.3 9 8.3 7.9 V5.6" fill="none" stroke="#444" stroke-width="1"/><path d="M9.8 0.6 L11 1.8 L6 6.8 L4.3 7.3 L4.8 5.6 Z" fill="#333"/></svg>
<div class="abs bt" style="left:550.2px">F4</div>
<svg class="abs" style="left:624px;top:782.8px" width="12" height="12" viewBox="0 0 12 12"><path d="M4.9 8.4 H1.2 V3.4 L3.4 0.9 H6.9 V3.3" fill="none" stroke="#444" stroke-width="0.95"/><path d="M1.2 3.6 H3.6 V1" fill="none" stroke="#444" stroke-width="0.9"/><rect x="4.9" y="3.6" width="6" height="7.4" fill="none" stroke="#444" stroke-width="0.95"/></svg>
<div class="abs bt" style="left:638.2px">F5</div>
<svg class="abs" style="left:712px;top:784.5px" width="12" height="8" viewBox="0 0 12 8"><path d="M0.6 2.4 H8.5" stroke="#333" stroke-width="1.5"/><path d="M8 0.3 L11 2.4 L8 4.5 Z" fill="#222"/><path d="M3.4 6.2 H11" stroke="#333" stroke-width="1.5"/><path d="M3.9 4.1 L0.8 6.2 L3.9 8.3 Z" fill="#222"/></svg>
<div class="abs bt" style="left:726.4px">F6</div>
<div class="abs bt7" style="left:807px">F7</div>
<svg class="abs" style="left:889px;top:783.5px" width="10" height="11" viewBox="0 0 10 11"><path d="M3.2 1.6 Q3.4 0.5 5 0.5 Q6.6 0.5 6.8 1.6" fill="none" stroke="#555" stroke-width="0.9"/><path d="M0.6 2.2 H9.4" stroke="#333" stroke-width="1.1"/><path d="M1.6 2.7 V9.6 Q1.6 10.2 2.3 10.2 H7.7 Q8.4 10.2 8.4 9.6 V2.7" fill="none" stroke="#555" stroke-width="0.95"/><path d="M3.7 3.6 V8.8 M5 3.6 V8.8 M6.3 3.6 V8.8" stroke="#999" stroke-width="0.7"/></svg>
<div class="abs bt" style="left:900.7px">F8</div>
<svg class="abs" style="left:977px;top:784.5px" width="10" height="9" viewBox="0 0 10 9"><path d="M0.3 1.4 H9.4 M0.3 4.1 H9.4 M0.3 7.1 H9.4" stroke="#333" stroke-width="1.4"/></svg>
<div class="abs bt" style="left:989.1px">F9</div>
<svg class="abs" style="left:1061px;top:783.8px" width="12" height="10" viewBox="0 0 12 10"><path d="M3.4 0.4 L4.6 1.6 H7.4 L8.6 0.4 L9.2 2.5 L11.4 4.8 L9.2 7.1 L8.6 9.2 L7.4 8.1 H4.6 L3.4 9.2 L2.8 7.1 L0.6 4.8 L2.8 2.5 Z" fill="#222"/><circle cx="6" cy="4.8" r="1.9" fill="#fff"/></svg>
<div class="abs bt" style="left:1074.6px">F10</div>
<svg class="abs" style="left:1155px;top:785.5px" width="21" height="8" viewBox="0 0 21 8"><path d="M1 0.6 L3.9 3.3 L1 6" fill="none" stroke="#555" stroke-width="0.9"/><path d="M4.6 6.7 H10.6" stroke="#777" stroke-width="1.3"/><path d="M14 3.1 Q14.8 1.8 16 2.5 Q17.2 3.3 18.9 2.2" fill="none" stroke="#555" stroke-width="1.1"/></svg>
<svg class="abs" style="left:1247px;top:784.5px" width="13" height="10" viewBox="0 0 13 10"><ellipse cx="6.6" cy="3.7" rx="5.1" ry="3.4" fill="#222"/><path d="M2.9 5.6 Q3.1 7.8 1.4 9.4 Q4.4 9 5.8 6.9 Z" fill="#222"/></svg>

</body></html>
